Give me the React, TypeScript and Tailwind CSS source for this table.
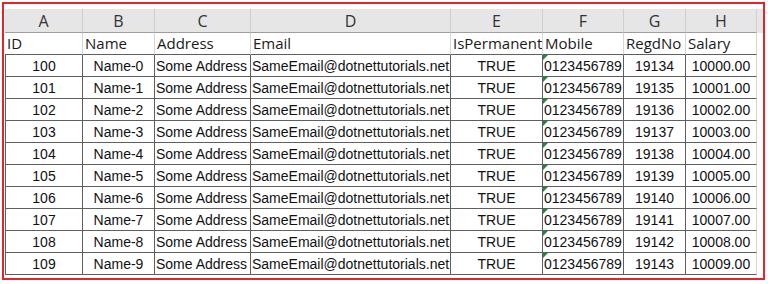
import React from "react";

const columns = ["A", "B", "C", "D", "E", "F", "G", "H"];
const headers = ["ID", "Name", "Address", "Email", "IsPermanent", "Mobile", "RegdNo", "Salary"];

const rows = Array.from({ length: 10 }, (_, i) => ({
    id: String(100 + i),
    name: `Name-${i}`,
    address: "Some Address",
    email: "SameEmail@dotnettutorials.net",
    permanent: "TRUE",
    mobile: "0123456789",
    regd: String(19134 + i),
    salary: `${10000 + i}.00`,
}));

const gridCols = "grid grid-cols-[78px_72px_96px_200px_92px_81px_62px_71px]";
const dataCell =
    "h-[22px] flex items-center border-r border-b border-[#5f5f5f] text-[14px] leading-none text-[#111] font-['Liberation_Sans',Arial,sans-serif] whitespace-nowrap overflow-hidden";

export default function App() {
    return (
        <div className="w-[768px] h-[284px] bg-white pt-[2px] pl-[2px]">
            <div className="w-[763px] h-[278px] border-2 border-[#e3242b] pt-[5px] pl-px">
                {/* column letters */}
                <div className={`${gridCols} bg-[#e6e6e6] font-['Open_Sans',sans-serif] text-[16px] text-[#333]`}>
                    {columns.map((c) => (
                        <div
                            key={c}
                            className="h-[24px] flex items-center justify-center border-r border-b border-r-[#cfcfcf] border-b-[#9e9e9e] leading-none"
                        >
                            {c}
                        </div>
                    ))}
                </div>

                {/* header row */}
                <div className={`${gridCols} font-['Open_Sans',sans-serif] text-[15px] text-[#1a1a1a]`}>
                    {headers.map((h) => (
                        <div
                            key={h}
                            className="h-[22px] flex items-center pl-[2px] border-r border-b border-r-[#d6d6d6] border-b-[#5f5f5f] leading-none whitespace-nowrap overflow-hidden"
                        >
                            {h}
                        </div>
                    ))}
                </div>

                {/* data rows */}
                {rows.map((r) => (
                    <div key={r.id} className={gridCols}>
                        <div className={`${dataCell} justify-center border-l`}>{r.id}</div>
                        <div className={`${dataCell} justify-center`}>{r.name}</div>
                        <div className={`${dataCell} pl-px`}>{r.address}</div>
                        <div className={`${dataCell} pl-px`}>{r.email}</div>
                        <div className={`${dataCell} justify-center`}>{r.permanent}</div>
                        <div className={`${dataCell} relative pl-px`}>
                            <span className="absolute left-0 top-0 w-0 h-0 border-t-[5px] border-t-[#1e8a3c] border-r-[5px] border-r-transparent" />
                            {r.mobile}
                        </div>
                        <div className={`${dataCell} justify-center`}>{r.regd}</div>
                        <div className={`${dataCell} justify-center border-r-[#d6d6d6]`}>{r.salary}</div>
                    </div>
                ))}
            </div>
        </div>
    );
}
